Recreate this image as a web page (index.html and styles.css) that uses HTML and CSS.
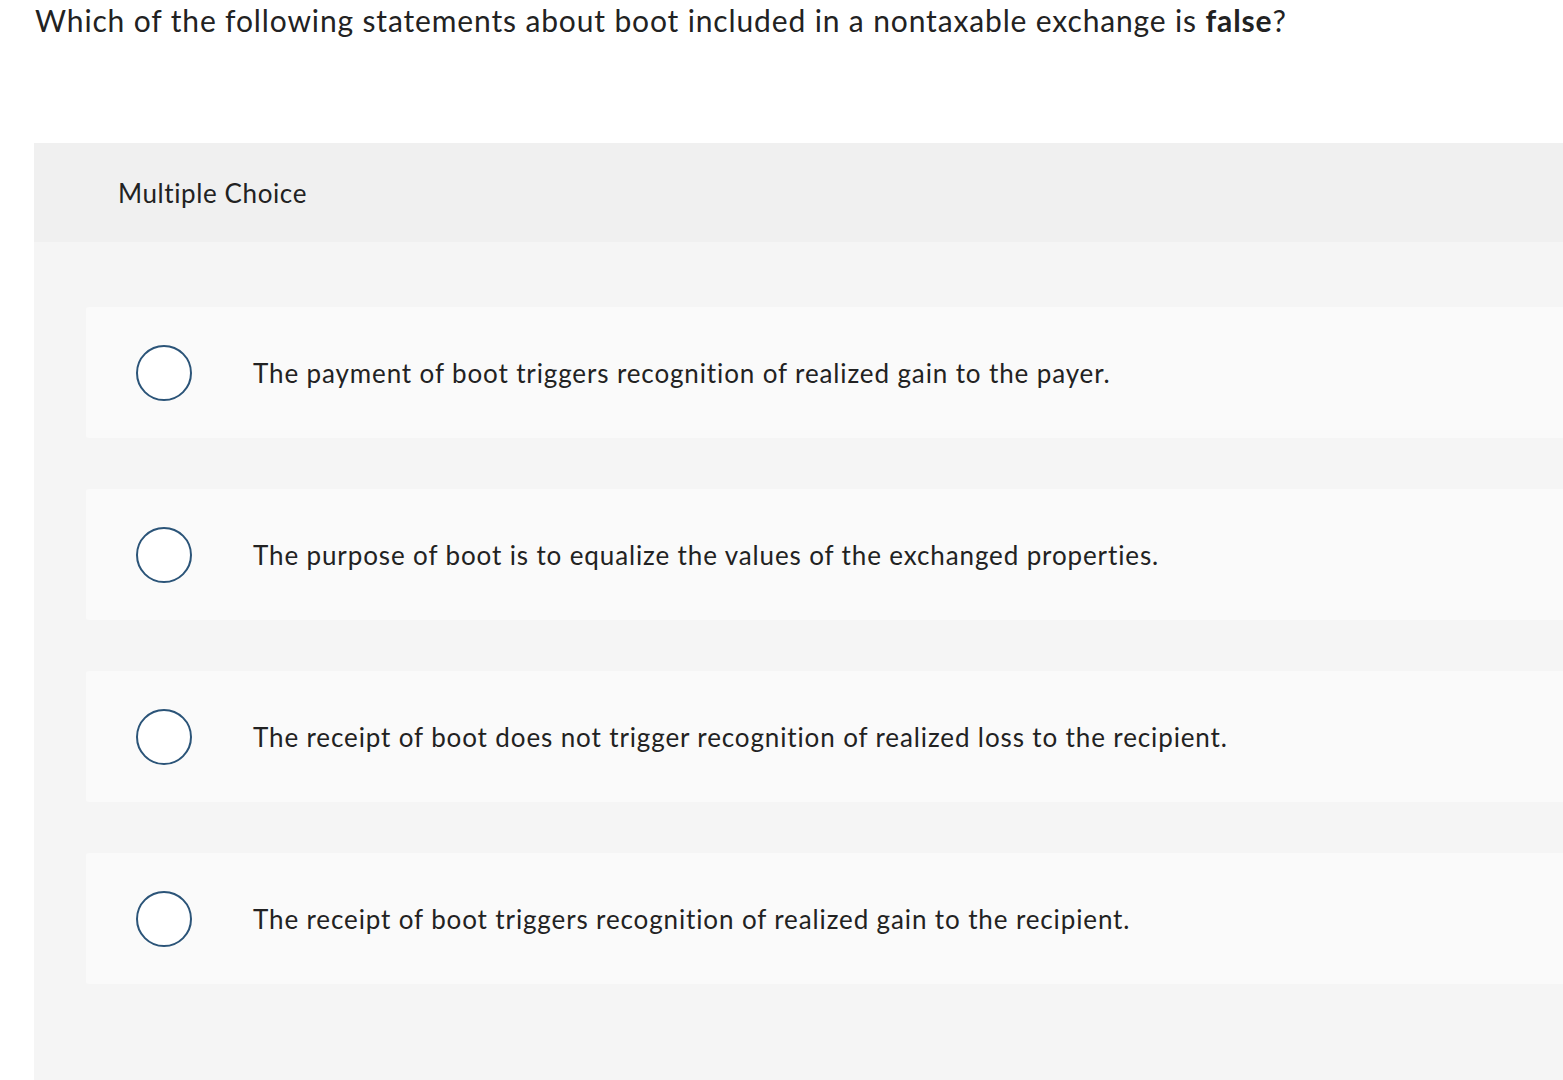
FILE: index.html
```html
<!DOCTYPE html>
<html>
<head>
<meta charset="utf-8">
<link rel="stylesheet" href="styles.css">
</head>
<body>
<h1 class="question">Which of the following statements about boot included in a nontaxable exchange is <strong>false</strong>?</h1>
<section class="card">
  <div class="card-head">Multiple Choice</div>
  <div class="card-body">
    <label class="option"><span class="radio"></span><span class="opt-text">The payment of boot triggers recognition of realized gain to the payer.</span></label>
    <label class="option"><span class="radio"></span><span class="opt-text">The purpose of boot is to equalize the values of the exchanged properties.</span></label>
    <label class="option"><span class="radio"></span><span class="opt-text">The receipt of boot does not trigger recognition of realized loss to the recipient.</span></label>
    <label class="option"><span class="radio"></span><span class="opt-text">The receipt of boot triggers recognition of realized gain to the recipient.</span></label>
  </div>
</section>
</body>
</html>
```
FILE: styles.css
```css
html, body {
  margin: 0;
  padding: 0;
  background: #ffffff;
  overflow: hidden;
  height: 1080px;
}
body {
  font-family: "Lato", "Open Sans", "Liberation Sans", sans-serif;
  color: #222222;
  padding-left: 34px;
}
.question {
  margin: 0;
  padding: 0 0 0 1px;
  height: 143px;
  font-size: 30px;
  font-weight: 400;
  line-height: 40px;
  letter-spacing: 0.86px;
  color: #222;
}
.question strong {
  font-weight: 700;
}
.card {
  width: 1600px;
  background: #f5f5f5;
  height: 940px;
}
.card-head {
  background: #f0f0f0;
  height: 99px;
  box-sizing: border-box;
  padding-left: 84px;
  display: flex;
  align-items: center;
  font-size: 26px;
  letter-spacing: 0.6px;
  color: #222;
}
.card-body {
  padding: 65px 0 0 52px;
  display: flex;
  flex-direction: column;
  gap: 51px;
}
.option {
  background: #fafafa;
  height: 131px;
  border-radius: 3px;
  display: flex;
  align-items: center;
  padding-left: 50px;
}
.radio {
  width: 52px;
  height: 52px;
  border: 2px solid #2b5478;
  border-radius: 50%;
  background: #ffffff;
  flex: none;
}
.opt-text {
  margin-left: 61px;
  font-size: 26px;
  letter-spacing: 0.88px;
  color: #222;
}
```
